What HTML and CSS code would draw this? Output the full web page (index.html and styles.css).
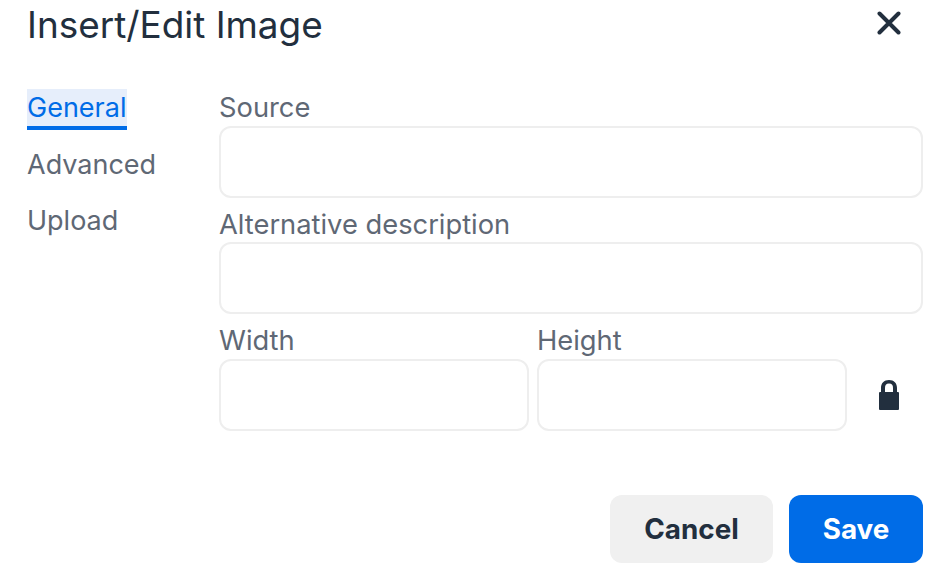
FILE: index.html
```html
<!DOCTYPE html>
<html lang="en">
  <head>
    <meta charset="UTF-8" />
    <title>Insert/Edit Image</title>
    <link rel="stylesheet" href="styles.css">
  </head>

  <body>
    <div class="dialog">
      <div class="header">
        <h1 class="title">Insert/Edit Image</h1>
        <svg class="close" width="24" height="24" viewBox="0 0 24 24">
          <path d="M2.5 2.5 L21.5 21.5 M21.5 2.5 L2.5 21.5" />
        </svg>
      </div>

      <div class="body">
        <ul class="tabs">
          <li class="on"><span>General</span></li>
          <li><span>Advanced</span></li>
          <li><span>Upload</span></li>
        </ul>

        <div class="form">
          <div class="field">
            <label>Source</label>
            <input type="text" />
          </div>
          <div class="field alt">
            <label>Alternative description</label>
            <input type="text" />
          </div>
          <div class="size">
            <div class="field">
              <label>Width</label>
              <input type="text" />
            </div>
            <div class="field">
              <label>Height</label>
              <input type="text" />
            </div>
            <div class="lock">
              <svg width="20" height="30" viewBox="0 0 20 30">
                <path d="M1 30 Q0 30 0 29 V13 Q0 12 1 12 H2 V8 C2 3 5 0 10 0 C15 0 18 3 18 8 V12 H19 Q20 12 20 13 V29 Q20 30 19 30 Z M6 12 H14 V8 C14 5 13 3.5 10 3.5 C7 3.5 6 5 6 8 Z" fill-rule="evenodd" />
              </svg>
            </div>
          </div>
        </div>
      </div>

      <div class="footer">
        <button class="btn cancel">Cancel</button>
        <button class="btn save">Save</button>
      </div>
    </div>
  </body>
</html>
```

FILE: styles.css
```css
* {
  margin: 0;
  padding: 0;
  box-sizing: border-box;
}

body {
  width: 944px;
  height: 574px;
  overflow: hidden;
  background-color: #fff;
  font-family: Inter, "Liberation Sans", sans-serif;
  color: #222f3e;
}

.dialog {
  padding-left: 27px;
  padding-right: 21px;
}

.header {
  display: flex;
  justify-content: space-between;
  align-items: center;
  height: 50px;
}

.title {
  font-size: 36.9px;
  font-weight: 400;
  line-height: 50px;
}

.close {
  margin-right: 22px;
  margin-top: -5px;
}

.close path {
  fill: none;
  stroke: #222f3e;
  stroke-width: 4;
  stroke-linecap: round;
}

.body {
  display: flex;
  padding-top: 40px;
}

.tabs {
  list-style-type: none;
  width: 192px;
  flex-shrink: 0;
  margin-top: -1px;
}

.tabs li {
  height: 56px;
  font-size: 27px;
  line-height: 38px;
  color: #5f6875;
}

.tabs li span {
  display: inline-block;
}

.tabs li + li span {
  padding-top: 1px;
}

.tabs li.on span {
  height: 41px;
  padding-right: 1px;
  background-color: #e6eefb;
  border-bottom: 4px solid #006ce7;
  color: #006ce7;
}

.form {
  flex: 1;
}

.field {
  margin-bottom: 8px;
}

.field label {
  display: block;
  height: 36px;
  font-size: 27.3px;
  line-height: 36px;
  color: #5f6875;
}

.field.alt label {
  line-height: 38px;
}

.field input {
  display: block;
  width: 100%;
  height: 72px;
  border: 2px solid #eeeeee;
  border-radius: 12px;
  background-color: #fff;
}

.size {
  display: flex;
  gap: 8px;
  padding-top: 1px;
}

.size .field {
  width: 310px;
}

.lock {
  display: flex;
  align-items: center;
  justify-content: center;
  width: 68px;
  margin-top: 36px;
  margin-bottom: 8px;
}

.lock path {
  fill: #222f3e;
}

.footer {
  display: flex;
  justify-content: flex-end;
  gap: 16px;
  padding-top: 56px;
}

.btn {
  height: 68px;
  border: none;
  border-radius: 12px;
  font-family: inherit;
  font-size: 27.8px;
  font-weight: 700;
}

.cancel {
  width: 163px;
  background-color: #f0f0f0;
  color: #222f3e;
}

.save {
  width: 134px;
  background-color: #006ce7;
  color: #fff;
}
```
